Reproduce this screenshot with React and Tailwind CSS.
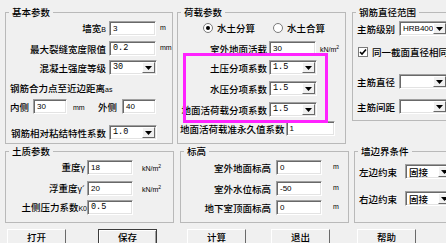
import React from "react";

const SUNKEN =
  "bg-white border border-t-[#a0a0a0] border-l-[#a0a0a0] border-r-white border-b-white shadow-[inset_1px_1px_0_#696969,inset_-1px_-1px_0_#e3e3e3]";
const MONO = "font-['Liberation_Mono',monospace] text-[8.5px] leading-none";
const SANS = "font-['Liberation_Sans',sans-serif] text-[8px] leading-none";
const TINY = "font-['Liberation_Sans',sans-serif] text-[7px]";
const CJK = "text-[9.5px] leading-[12px]";

function Edit({ w, value = "", mono = false }) {
  return (
    <div
      className={`${SUNKEN} ${w} h-[15px] shrink-0 flex items-center pl-[3px] overflow-hidden ${
        mono ? MONO : SANS
      }`}
    >
      {value}
    </div>
  );
}

function Combo({ w, value = "", font = MONO }) {
  return (
    <div className={`${SUNKEN} ${w} h-[15px] shrink-0 flex items-stretch p-[1px]`}>
      <div className={`flex-1 flex items-center pl-[2px] whitespace-nowrap ${font}`}>{value}</div>
      <div className="w-[13px] shrink-0 bg-[#f0f0f0] border border-t-white border-l-white border-r-[#696969] border-b-[#696969] flex items-center justify-center">
        <svg width="7" height="4" viewBox="0 0 7 4">
          <polygon points="0,0 7,0 3.5,4" fill="#000" />
        </svg>
      </div>
    </div>
  );
}

function Group({ title, className = "", children }) {
  return (
    <div className={`shrink-0 border border-[#b9b9b9] flex flex-col ${className}`}>
      <div className="-mt-[7px] ml-[3px] px-[3px] w-fit bg-[#f0f0f0] leading-[12px] whitespace-nowrap">
        {title}
      </div>
      {children}
    </div>
  );
}

function Radio({ checked }) {
  return (
    <div className="w-[10px] h-[10px] shrink-0 rounded-full bg-white border border-[#7a7a7a] flex items-center justify-center">
      {checked && <div className="w-[4px] h-[4px] rounded-full bg-black" />}
    </div>
  );
}

function Btn({ label, ml, def = false }) {
  return (
    <div
      className={`${ml} w-[59px] h-[22px] shrink-0 flex justify-center pt-[1px] leading-[12px] bg-[#f0f0f0] ${
        def
          ? "border border-[#3c3c3c] shadow-[inset_1px_1px_0_#fff,inset_-1px_-1px_0_#a0a0a0]"
          : "border border-t-white border-l-white border-r-[#696969] border-b-[#696969]"
      }`}
    >
      {label}
    </div>
  );
}

const Unit = ({ children, className = "" }) => (
  <span className={`${TINY} ${className}`}>{children}</span>
);

const KN = () => (
  <span className={`${TINY} whitespace-nowrap`}>
    kN/m<sup className="text-[5px]">2</sup>
  </span>
);

export default function App() {
  return (
    <div className="w-[446px] h-[250px] bg-white overflow-hidden text-black text-[9.5px] font-medium font-['Noto_Sans_CJK_SC',sans-serif]">
      <div className="h-[243px] bg-[#f0f0f0] overflow-hidden pt-[12px]">
        {/* top row */}
        <div className="flex items-start">
          {/* 基本参数 */}
          <Group title="基本参数" className="ml-[5px] w-[168px] h-[132px]">
            <div className="mt-[3px] h-[15px] flex items-center">
              <div className="w-[100px] text-right leading-[12px]">
                墙宽<span className={TINY}>B</span>
              </div>
              <div className="ml-[3px]">
                <Edit w="w-[47px]" value="3" />
              </div>
              <Unit className="ml-[4px]">m</Unit>
            </div>
            <div className="mt-[5px] h-[15px] flex items-center">
              <div className="w-[100px] text-right leading-[12px]">最大裂缝宽度限值</div>
              <div className="ml-[3px]">
                <Edit w="w-[47px]" value="0.2" mono />
              </div>
              <Unit className="ml-[4px]">mm</Unit>
            </div>
            <div className="mt-[4px] h-[15px] flex items-center">
              <div className="w-[100px] text-right leading-[12px]">混凝土强度等级</div>
              <div className="ml-[3px]">
                <Combo w="w-[48px]" value="30" />
              </div>
            </div>
            <div className="mt-[7px] pl-[4px] leading-[12px] whitespace-nowrap">
              钢筋合力点至近边距离<span className={TINY}>as</span>
            </div>
            <div className="mt-[3px] h-[15px] flex items-center pl-[4px]">
              <div className="w-[23px] leading-[12px]">内侧</div>
              <Edit w="w-[34px]" value="30" />
              <div className="w-[31px] pl-[6px] leading-none">
                <Unit>mm</Unit>
              </div>
              <div className="w-[24px] leading-[12px]">外侧</div>
              <Edit w="w-[34px]" value="40" />
            </div>
            <div className="mt-[11px] h-[15px] flex items-center">
              <div className="w-[100px] text-right leading-[12px] whitespace-nowrap">钢筋相对粘结特性系数</div>
              <div className="ml-[3px]">
                <Combo w="w-[48px]" value="1.0" />
              </div>
            </div>
          </Group>

          {/* 荷载参数 */}
          <Group title="荷载参数" className="ml-[4px] w-[169px] h-[132px] relative">
            <div className="mt-[4px] h-[12px] flex items-center">
              <div className="ml-[25px]">
                <Radio checked />
              </div>
              <span className="ml-[4px] leading-[12px]">水土分算</span>
              <div className="ml-[18px]">
                <Radio />
              </div>
              <span className="ml-[4px] leading-[12px]">水土合算</span>
            </div>
            <div className="mt-[7px] h-[15px] flex items-center">
              <div className="w-[89px] text-right leading-[12px]">室外地面活载</div>
              <div className="ml-[2px]">
                <Edit w="w-[47px]" value="30" />
              </div>
              <div className="ml-[4px] leading-none">
                <KN />
              </div>
            </div>
            <div className="mt-[4px] h-[15px] flex items-center">
              <div className="w-[89px] text-right leading-[12px]">土压分项系数</div>
              <div className="ml-[2px]">
                <Combo w="w-[48px]" value="1.5" />
              </div>
            </div>
            <div className="mt-[6px] h-[15px] flex items-center">
              <div className="w-[89px] text-right leading-[12px]">水压分项系数</div>
              <div className="ml-[2px]">
                <Combo w="w-[48px]" value="1.5" />
              </div>
            </div>
            <div className="mt-[6px] h-[15px] flex items-center">
              <div className="w-[89px] text-right leading-[12px] whitespace-nowrap">地面活荷载分项系数</div>
              <div className="ml-[2px]">
                <Combo w="w-[48px]" value="1.5" />
              </div>
            </div>
            <div className="mt-[4px] h-[15px] flex items-center pl-[2px]">
              <div className="leading-[12px] whitespace-nowrap">地面活荷载准永久值系数</div>
              <div className="ml-[1px]">
                <Edit w="w-[49px]" value="1" />
              </div>
            </div>
            {/* annotation overlay */}
            <div className="absolute left-[5px] top-[40px] w-[145px] h-[70px] border-[3px] border-[#ff22ff] pointer-events-none" />
          </Group>

          {/* 钢筋直径范围 */}
          <Group title="钢筋直径范围" className="ml-[6px] w-[110px] h-[109px]">
            <div className="mt-[3px] h-[15px] flex items-center pl-[4px]">
              <div className="w-[42px] leading-[12px] whitespace-nowrap">主筋级别</div>
              <Combo w="w-[49px]" value="HRB400" font={SANS} />
            </div>
            <div className="mt-[10px] h-[12px] flex items-center pl-[5px]">
              <div className="w-[10px] h-[10px] shrink-0 bg-white border border-[#7a7a7a] flex items-center justify-center">
                <svg width="8" height="8" viewBox="0 0 8 8">
                  <polyline points="1,4 3,6 7,1.5" fill="none" stroke="#000" strokeWidth="1.6" />
                </svg>
              </div>
              <span className="ml-[4px] leading-[12px] whitespace-nowrap">同一截面直径相同</span>
            </div>
            <div className="mt-[16px] h-[15px] flex items-center pl-[4px]">
              <div className="w-[42px] leading-[12px] whitespace-nowrap">主筋直径</div>
              <Combo w="w-[49px]" />
            </div>
            <div className="mt-[10px] h-[15px] flex items-center pl-[4px]">
              <div className="w-[42px] leading-[12px] whitespace-nowrap">主筋间距</div>
              <Combo w="w-[49px]" />
            </div>
          </Group>
        </div>

        {/* bottom row */}
        <div className="mt-[7px] flex items-start">
          <Group title="土质参数" className="ml-[5px] w-[169px] h-[72px]">
            <div className="mt-[3px] h-[15px] flex items-center">
              <div className="w-[79px] text-right leading-[12px]">
                重度<span className="font-['Liberation_Sans',sans-serif] text-[9px]">γ</span>
              </div>
              <div className="ml-[2px]">
                <Edit w="w-[46px]" value="18" />
              </div>
              <div className="ml-[9px] leading-none">
                <KN />
              </div>
            </div>
            <div className="mt-[6px] h-[15px] flex items-center">
              <div className="w-[79px] text-right leading-[12px]">
                浮重度<span className="font-['Liberation_Sans',sans-serif] text-[9px]">γ´</span>
              </div>
              <div className="ml-[2px]">
                <Edit w="w-[46px]" value="20" />
              </div>
              <div className="ml-[9px] leading-none">
                <KN />
              </div>
            </div>
            <div className="mt-[4px] h-[15px] flex items-center">
              <div className="w-[81px] text-right leading-[12px] whitespace-nowrap">
                土侧压力系数<span className={TINY}>K0</span>
              </div>
              <div>
                <Edit w="w-[46px]" value="0.5" mono />
              </div>
            </div>
          </Group>

          <Group title="标高" className="ml-[6px] w-[169px] h-[72px]">
            <div className="mt-[3px] h-[15px] flex items-center">
              <div className="w-[90px] text-right leading-[12px]">室外地面标高</div>
              <div className="ml-[5px]">
                <Edit w="w-[46px]" value="0" />
              </div>
              <Unit className="ml-[11px]">m</Unit>
            </div>
            <div className="mt-[6px] h-[15px] flex items-center">
              <div className="w-[90px] text-right leading-[12px]">室外水位标高</div>
              <div className="ml-[5px]">
                <Edit w="w-[46px]" value="-50" />
              </div>
              <Unit className="ml-[11px]">m</Unit>
            </div>
            <div className="mt-[4px] h-[15px] flex items-center">
              <div className="w-[90px] text-right leading-[12px]">地下室顶面标高</div>
              <div className="ml-[5px]">
                <Edit w="w-[46px]" value="0" />
              </div>
              <Unit className="ml-[11px]">m</Unit>
            </div>
          </Group>

          <Group title="墙边界条件" className="ml-[5px] w-[110px] h-[72px]">
            <div className="mt-[7px] h-[15px] flex items-center pl-[4px]">
              <div className="w-[46px] leading-[12px] whitespace-nowrap">左边约束</div>
              <Combo w="w-[48px]" value="固接" font={CJK} />
            </div>
            <div className="mt-[12px] h-[15px] flex items-center pl-[4px]">
              <div className="w-[46px] leading-[12px] whitespace-nowrap">右边约束</div>
              <Combo w="w-[48px]" value="固接" font={CJK} />
            </div>
          </Group>
        </div>

        {/* buttons */}
        <div className="mt-[6px] flex items-start">
          <Btn label="打开" ml="ml-[7px]" />
          <Btn label="保存" ml="ml-[32px]" def />
          <Btn label="计算" ml="ml-[30px]" />
          <Btn label="退出" ml="ml-[25px]" />
          <Btn label="帮助" ml="ml-[27px]" />
        </div>
      </div>
    </div>
  );
}
